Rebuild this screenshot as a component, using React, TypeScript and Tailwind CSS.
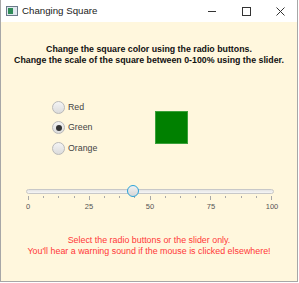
import React from "react";

const ticks = Array.from({ length: 17 }, (_, i) => i);
const labels = [0, 25, 50, 75, 100];

export default function App() {
  const value = 43;
  return (
    <div className="w-[299px] h-[283px] bg-white" style={{ fontFamily: '"Liberation Sans", Arial, sans-serif' }}>
      <div className="w-[298px] h-[282px] border border-t-0 border-[#a7a7a7] flex flex-col">
        {/* title bar */}
        <div className="h-[22px] bg-white flex items-center shrink-0">
          <div className="ml-[5px] w-[12px] h-[10px] border border-[#6b7a8a] bg-[#dfe8ef] flex items-center pl-[1px]">
            <div className="w-[5px] h-[6px] bg-[#2e8b57]" />
          </div>
          <span className="ml-[4px] text-[9.7px] text-[#1a1a1a] leading-none whitespace-nowrap">Changing Square</span>
          <div className="ml-auto flex items-center">
            <div className="w-[34px] flex justify-center">
              <div className="w-[8px] h-px bg-[#333]" />
            </div>
            <div className="w-[34px] flex justify-center">
              <div className="w-[9px] h-[9px] border border-[#333]" />
            </div>
            <div className="w-[34px] flex justify-center">
              <svg width="9" height="9" viewBox="0 0 9 9">
                <path d="M0.5 0.5 L8.5 8.5 M8.5 0.5 L0.5 8.5" stroke="#333" strokeWidth="1" />
              </svg>
            </div>
          </div>
        </div>
        {/* content */}
        <div className="flex-1 bg-[#fff7dd] flex flex-col">
          <div className="mt-[22px] text-center font-bold text-[8.8px] leading-[11px] text-[#111] whitespace-nowrap">
            <div>Change the square color using the radio buttons.</div>
            <div>Change the scale of the square between 0-100% using the slider.</div>
          </div>
          <div className="mt-[31px] flex items-start">
            <div className="ml-[51px] w-[103px] flex flex-col">
              {[
                ["Red", false],
                ["Green", true],
                ["Orange", false],
              ].map(([label, checked]) => (
                <div key={label as string} className="flex items-center h-[20.5px]">
                  <div className="w-[13px] h-[13px] rounded-full border border-[#b9b9b9] bg-gradient-to-b from-[#f4f4f4] to-[#dcdcdc] flex items-center justify-center">
                    {checked && <div className="w-[6px] h-[6px] rounded-full bg-[#333]" />}
                  </div>
                  <span className="ml-[3px] text-[8.8px] text-[#444]">{label as string}</span>
                </div>
              ))}
            </div>
            <div className="mt-[14px] w-[33px] h-[33px] bg-[#008000] border border-[#3aa03a]" />
          </div>
          {/* slider */}
          <div className="mt-[26px] ml-[25px] w-[248px] relative h-[25px]">
            <div className="absolute left-0 right-0 top-[4px] h-[5px] rounded-full border border-[#c8c8c8] bg-gradient-to-b from-[#e4e4e4] to-[#f6f6f6]" />
            <div className="absolute left-[2px] right-[2px] top-[11px] flex justify-between items-start">
              {ticks.map((t) => (
                <div key={t} className={`w-px bg-[#a8a8a8] ${t % 4 === 0 ? "h-[4px]" : "h-[2px]"}`} />
              ))}
            </div>
            <div className="absolute left-[2px] right-[2px] top-[18px] h-[10px]">
              {labels.map((l) => (
                <span
                  key={l}
                  className="absolute -translate-x-1/2 text-[7.5px] leading-none text-[#555]"
                  style={{ left: `${l}%` }}
                >
                  {l}
                </span>
              ))}
            </div>
            <div
              className="absolute top-0 w-[12px] h-[12px] rounded-full border-[1.5px] border-[#2aa3d8] bg-gradient-to-b from-[#f2f2f2] to-[#d6d6d6] -translate-x-1/2"
              style={{ left: `calc(2px + ${value}% * 244 / 248)` }}
            />
          </div>
          <div className="mt-[25px] text-center text-[8.9px] leading-[11px] text-[#ff3838] whitespace-nowrap">
            <div>Select the radio buttons or the slider only.</div>
            <div>You'll hear a warning sound if the mouse is clicked elsewhere!</div>
          </div>
        </div>
      </div>
    </div>
  );
}
